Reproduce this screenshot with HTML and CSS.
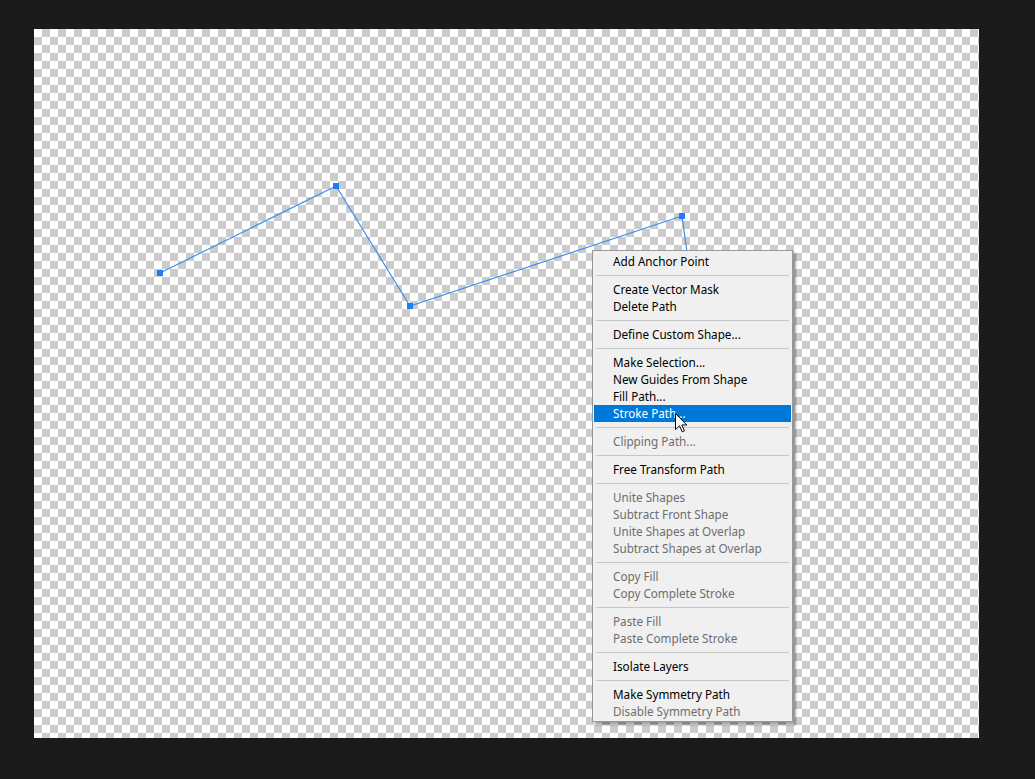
FILE: index.html
```html
<!DOCTYPE html>
<html>
<head>
<meta charset="utf-8">
<link rel="stylesheet" href="styles.css">
</head>
<body>
<div class="canvas">
  <svg class="paths" width="945" height="709" viewBox="0 0 945 709">
    <polyline points="126,244 302,157 376,277 648,187 656,245" fill="none" stroke="#3b91ef" stroke-width="1.2"/>
    <rect x="123" y="241" width="6" height="6" fill="#1a7ff2"/>
    <rect x="299" y="154" width="6" height="6" fill="#1a7ff2"/>
    <rect x="373" y="274" width="6" height="6" fill="#1a7ff2"/>
    <rect x="645" y="184" width="6" height="6" fill="#1a7ff2"/>
  </svg>
  <div class="menu">
    <div class="item">Add Anchor Point</div>
    <div class="sep"></div>
    <div class="item">Create Vector Mask</div>
    <div class="item">Delete Path</div>
    <div class="sep"></div>
    <div class="item">Define Custom Shape...</div>
    <div class="sep"></div>
    <div class="item">Make Selection...</div>
    <div class="item">New Guides From Shape</div>
    <div class="item">Fill Path...</div>
    <div class="item active">Stroke Path...</div>
    <div class="sep"></div>
    <div class="item disabled">Clipping Path...</div>
    <div class="sep"></div>
    <div class="item">Free Transform Path</div>
    <div class="sep"></div>
    <div class="item disabled">Unite Shapes</div>
    <div class="item disabled">Subtract Front Shape</div>
    <div class="item disabled">Unite Shapes at Overlap</div>
    <div class="item disabled">Subtract Shapes at Overlap</div>
    <div class="sep"></div>
    <div class="item disabled">Copy Fill</div>
    <div class="item disabled">Copy Complete Stroke</div>
    <div class="sep"></div>
    <div class="item disabled">Paste Fill</div>
    <div class="item disabled">Paste Complete Stroke</div>
    <div class="sep"></div>
    <div class="item">Isolate Layers</div>
    <div class="sep"></div>
    <div class="item">Make Symmetry Path</div>
    <div class="item disabled">Disable Symmetry Path</div>
  </div>
  <svg class="cursor" width="13" height="20" viewBox="0 0 13 20">
    <path d="M0.5,0.5 L0.5,16.5 L4.5,12.8 L7.2,18.8 L9.4,17.8 L6.8,12 L11.8,12 Z" fill="#fff" stroke="#000" stroke-width="1" stroke-linejoin="miter"/>
  </svg>
</div>
</body>
</html>
```
FILE: styles.css
```css
html, body {
  margin: 0;
  padding: 0;
  background: #1b1b1b;
  width: 1035px;
  height: 779px;
  overflow: hidden;
}
body {
  padding-top: 29px;
  padding-left: 34px;
  box-sizing: border-box;
}
.canvas {
  position: relative;
  width: 945px;
  height: 709px;
  background-color: #fff;
  background-image: repeating-conic-gradient(#cccccc 0 25%, #ffffff 0 50%);
  background-size: 16px 16px;
}
.paths {
  position: absolute;
  left: 0;
  top: 0;
}
.menu {
  position: absolute;
  left: 558px;
  top: 221px;
  width: 197px;
  padding: 2px 1px 1px 1px;
  background: #f0f0f0;
  border: 1px solid #979797;
  box-shadow: 3px 3px 2px rgba(0, 0, 0, 0.35);
  font-family: "Noto Sans", "Open Sans", sans-serif;
  font-size: 11.7px;
  color: #000;
}
.item {
  height: 17px;
  line-height: 17px;
  padding-left: 19px;
  white-space: nowrap;
}
.item.disabled {
  color: #6d6d6d;
}
.item.active {
  background: #0078d7;
  color: #fff;
}
.sep {
  height: 1px;
  margin: 5px 2px;
  background: #c6c6c6;
}
.cursor {
  position: absolute;
  left: 641px;
  top: 384px;
}
```
